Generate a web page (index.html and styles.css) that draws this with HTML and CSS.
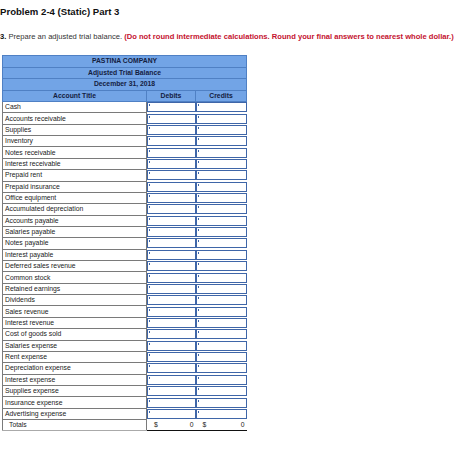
FILE: index.html
```html
<!DOCTYPE html>
<html>
<head>
<meta charset="utf-8">
<link rel="stylesheet" href="styles.css">
</head>
<body>
<h1 class="title">Problem 2-4 (Static) Part 3</h1>
<p class="instr"><b class="num">3.</b> Prepare an adjusted trial balance. <span class="warn">(Do not round intermediate calculations. Round your final answers to nearest whole dollar.)</span></p>
<table class="tb">
<colgroup><col class="c-acc"><col class="c-amt"><col class="c-amt2"></colgroup>
<thead>
<tr><th colspan="3">PASTINA COMPANY</th></tr>
<tr><th colspan="3">Adjusted Trial Balance</th></tr>
<tr><th colspan="3">December 31, 2018</th></tr>
<tr><th>Account Title</th><th>Debits</th><th>Credits</th></tr>
</thead>
<tbody id="rows">
</tbody>
<tfoot>
<tr class="tot"><td class="acc tot-l">Totals</td><td class="amt"><span>$</span><span>0</span></td><td class="amt"><span>$</span><span>0</span></td></tr>
</tfoot>
</table>
<script>
var names=["Cash","Accounts receivable","Supplies","Inventory","Notes receivable","Interest receivable","Prepaid rent","Prepaid insurance","Office equipment","Accumulated depreciation","Accounts payable","Salaries payable","Notes payable","Interest payable","Deferred sales revenue","Common stock","Retained earnings","Dividends","Sales revenue","Interest revenue","Cost of goods sold","Salaries expense","Rent expense","Depreciation expense","Interest expense","Supplies expense","Insurance expense","Advertising expense"];
var tb=document.getElementById("rows");
names.forEach(function(n){
  var tr=document.createElement("tr");
  tr.innerHTML='<td class="acc">'+n+'</td><td class="in"><div class="box"></div></td><td class="in"><div class="box"></div></td>';
  tb.appendChild(tr);
});
</script>
</body>
</html>
```
FILE: styles.css
```css
body{margin:0;padding:0;font-family:"Liberation Sans",Arial,sans-serif;color:#222;background:#fff;}
.title{font-size:9.6px;font-weight:bold;margin:0;padding:5px 0 0 0;line-height:13px;color:#111;}
.instr{font-size:7.6px;margin:14px 0 0 0;line-height:10px;color:#333;white-space:nowrap;}
.num{color:#111;}
.warn{color:#c4122f;font-weight:bold;}
.tb{border-collapse:collapse;margin:13px 0 0 2px;table-layout:fixed;width:244px;font-size:6.8px;}
.c-acc{width:144px}.c-amt{width:49px}.c-amt2{width:51px}
.tb th{background:#72a4e6;color:#14203f;font-weight:bold;height:11.5px;box-sizing:border-box;padding:0;border:1px solid #4f80c4;line-height:8px;font-size:6.8px;}
.tb td{height:11.37px;box-sizing:border-box;padding:0;line-height:8px;}
.acc{border:1px solid #7a7a7a;padding-left:2px !important;color:#222;white-space:nowrap;}
.in{padding:0 !important;vertical-align:middle;}
.box{height:10px;box-sizing:border-box;border:1px solid #3f66a8;background:#fff;position:relative;}
.box::before{content:"";position:absolute;left:1px;top:1px;width:1px;height:2px;background:#3f66a8;}
.tot-l{padding-left:6px !important;border-bottom:1px solid #aaa;}
.tot .amt{border-bottom:1.5px solid #111;}
.amt{padding:0 2px 0 7px !important;}
.amt span:last-child{float:right;}
```
